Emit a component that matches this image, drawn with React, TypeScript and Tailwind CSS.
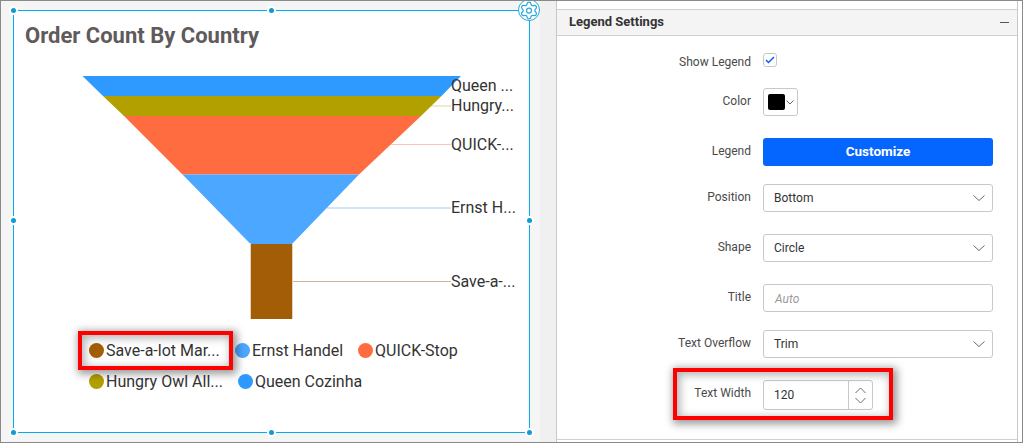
import { ReactNode } from "react";
import { Settings } from "lucide-react";

const font = { fontFamily: "Roboto, sans-serif" };

function Handle({ className }: { className: string }) {
  return <span className={`absolute h-[5px] w-[5px] rounded-full bg-[#0f9ad8] ring-2 ring-white ${className}`} />;
}

function Chevron() {
  return (
    <svg width="14" height="8" viewBox="0 0 14 8" fill="none" stroke="#6b6b6b" strokeWidth="1">
      <path d="M1.5 1.5 7 6.5l5.5-5" />
    </svg>
  );
}

function Funnel() {
  return (
    <svg width="516" height="262" viewBox="14 66 516 262" className="block">
      <path d="M431 106h20" stroke="#e0d79a" strokeWidth="1" />
      <path d="M391 144.500h60" stroke="#f9c4ba" strokeWidth="1" />
      <path d="M327 208h124" stroke="#cfe6fb" strokeWidth="2" />
      <path d="M292 281.500h159" stroke="#cfb592" strokeWidth="1" />
      <polygon points="82.500,76 461,76 441.500,96 103,96" fill="#2e9aff" />
      <polygon points="103,96 441.500,96 421,116 124,116" fill="#b29f00" />
      <polygon points="124,116 421,116 359,174.500 182.500,174.500" fill="#ff6c40" />
      <polygon points="182.500,174.500 359,174.500 292,244 250.500,244" fill="#4ba7ff" />
      <path d="M250.500 243v76M292.500 243v76" stroke="#e3d3bd" strokeWidth="1" />
      <rect x="251" y="244" width="41" height="75" fill="#a45d07" />
      <g fontFamily="Roboto, sans-serif" fontSize="16" fill="#333333">
        <text x="451" y="91">Queen ...</text>
        <text x="451" y="111">Hungry...</text>
        <text x="451" y="150">QUICK-...</text>
        <text x="451" y="213">Ernst H...</text>
        <text x="451" y="287">Save-a-...</text>
      </g>
    </svg>
  );
}

function LegendItem({ color, label, className }: { color: string; label: string; className: string }) {
  return (
    <div className={`flex items-center gap-[2px] ${className}`}>
      <span className="h-[15px] w-[15px] rounded-full" style={{ backgroundColor: color }} />
      <span>{label}</span>
    </div>
  );
}

function Row({ label, children, className, labelTop = "pt-[6px]" }: { label: string; children: ReactNode; className: string; labelTop?: string }) {
  return (
    <div className={`flex ${className}`}>
      <div className={`w-[200px] pr-[6px] text-right text-[12px] leading-[14px] text-[#4a4a4a] ${labelTop}`}>{label}</div>
      <div className="ml-[6px] flex-1">{children}</div>
    </div>
  );
}

function Select({ value }: { value: string }) {
  return (
    <div className="flex h-[28px] w-[230px] items-center justify-between rounded-[3px] border border-[#c8c8c8] pl-[10px] pr-[6px] text-[12px] text-[#333333]">
      <span>{value}</span>
      <Chevron />
    </div>
  );
}

export default function App() {
  return (
    <div className="relative flex h-[443px] w-[1023px] overflow-hidden border border-[#8a8a8a] bg-white" style={font}>
      {/* CHART SIDE */}
      <div className="h-full w-[539px] bg-[#f5f5f5] pl-[12px] pt-[9px]">
        <div className="relative h-[423px] w-[517px] border border-[#00aeef] bg-white">
          <Handle className="left-[-3px] top-[-3px]" />
          <Handle className="left-[255px] top-[-3px]" />
          <Handle className="left-[-3px] top-[207px]" />
          <Handle className="right-[-3px] top-[207px]" />
          <Handle className="bottom-[-3px] left-[-3px]" />
          <Handle className="bottom-[-3px] left-[255px]" />
          <Handle className="bottom-[-3px] right-[-3px]" />
          <div className="pl-[11px] pt-[11px] text-[22px] font-bold leading-[27px] text-[#5f5a5c]">Order Count By Country</div>
          <div className="mt-[17px]">
            <Funnel />
          </div>
          <div className="ml-[75px] mt-[7px] text-[16px] leading-[31px] text-[#333333]">
            <div className="flex">
              <LegendItem color="#a45d07" label="Save-a-lot Mar..." className="w-[146px]" />
              <LegendItem color="#4ba7ff" label="Ernst Handel" className="w-[123px]" />
              <LegendItem color="#ff6c40" label="QUICK-Stop" className="w-[110px]" />
            </div>
            <div className="flex">
              <LegendItem color="#b29f00" label="Hungry Owl All..." className="w-[149px]" />
              <LegendItem color="#2e9aff" label="Queen Cozinha" className="w-[130px]" />
            </div>
          </div>
          {/* gear */}
          <div className="absolute left-[504px] top-[-12px] flex h-[22px] w-[22px] items-center justify-center rounded-full border border-[#29a9e0] bg-white">
            <Settings size={21} color="#29a9e0" strokeWidth={1.5} />
          </div>
          {/* legend annotation */}
          <div className="absolute left-[64px] top-[320px] h-[39px] w-[155px] border-[4px] border-[#ff0000] shadow-[2px_2px_8px_2px_rgba(0,0,0,0.4),inset_2px_2px_8px_1px_rgba(0,0,0,0.3)]" />
        </div>
      </div>

      {/* SETTINGS SIDE */}
      <div className="h-full w-[16px] bg-[#f0f0f0]" />
      <div className="h-full w-[462px] border-x border-[#c8c8c8] bg-white pt-[8px]">
        <div className="flex h-[27px] items-center justify-between border-y border-[#d0d0d0] bg-[#f4f4f4] pl-[12px] pr-[8px]">
          <span className="pb-[1px] text-[13px] font-bold text-[#333333]">Legend Settings</span>
          <span className="h-px w-[9px] bg-[#555555]" />
        </div>
        <div className="relative h-[404px] border-b border-[#d0d0d0]">
          <div className="pt-[17px]">
            <Row label="Show Legend" labelTop="pt-[2px]" className="h-[35px]">
              <span className="flex h-[14px] w-[14px] items-center justify-center rounded-[3px] border border-[#c8c8c8]">
                <svg width="10" height="8" viewBox="0 0 10 8" fill="none" stroke="#0b5cff" strokeWidth="1.500">
                  <path d="M1 4l2.500 2.500L9 1" />
                </svg>
              </span>
            </Row>
            <Row label="Color" className="h-[50px]">
              <div className="flex h-[28px] w-[35px] items-center gap-[1px] rounded-[3px] border border-[#c8c8c8] pl-[4px]">
                <span className="h-[16px] w-[17px] rounded-[2px] bg-black" />
                <svg width="8" height="5" viewBox="0 0 8 5" fill="none" stroke="#6b6b6b"><path d="M.5.500 4 4 7.500.500" /></svg>
              </div>
            </Row>
            <Row label="Legend" className="h-[46px]">
              <div className="flex h-[28px] w-[230px] items-center justify-center rounded-[3px] bg-[#0565ff] pb-[2px] text-[13.5px] font-bold text-white">Customize</div>
            </Row>
            <Row label="Position" className="h-[50px]"><Select value="Bottom" /></Row>
            <Row label="Shape" className="h-[50px]"><Select value="Circle" /></Row>
            <Row label="Title" className="h-[46px]">
              <div className="flex h-[28px] w-[230px] items-center rounded-[3px] border border-[#c8c8c8] pl-[11px] pt-[1px] text-[12px] italic text-[#9a9a9a]">Auto</div>
            </Row>
            <Row label="Text Overflow" className="h-[50px]"><Select value="Trim" /></Row>
            <Row label="Text Width" className="h-[40px]">
              <div className="flex h-[30px] w-[110px] rounded-[3px] border border-[#c8c8c8] text-[12px] text-[#333333]">
                <span className="flex flex-1 items-center pl-[10px]">120</span>
                <span className="flex w-[24px] flex-col items-center justify-center gap-[3px] border-l border-[#c8c8c8]">
                  <svg width="11" height="7" viewBox="0 0 11 7" fill="none" stroke="#6b6b6b"><path d="M.5 6 5.500 1l5 5" /></svg>
                  <svg width="11" height="7" viewBox="0 0 11 7" fill="none" stroke="#6b6b6b"><path d="M.5 1l5 5 5-5" /></svg>
                </span>
              </div>
            </Row>
          </div>
          {/* text width annotation */}
          <div className="absolute left-[116px] top-[332px] h-[52px] w-[220px] border-[4px] border-[#ff0000] shadow-[2px_2px_8px_2px_rgba(0,0,0,0.4),inset_2px_2px_8px_1px_rgba(0,0,0,0.3)]" />
        </div>
      </div>
    </div>
  );
}
